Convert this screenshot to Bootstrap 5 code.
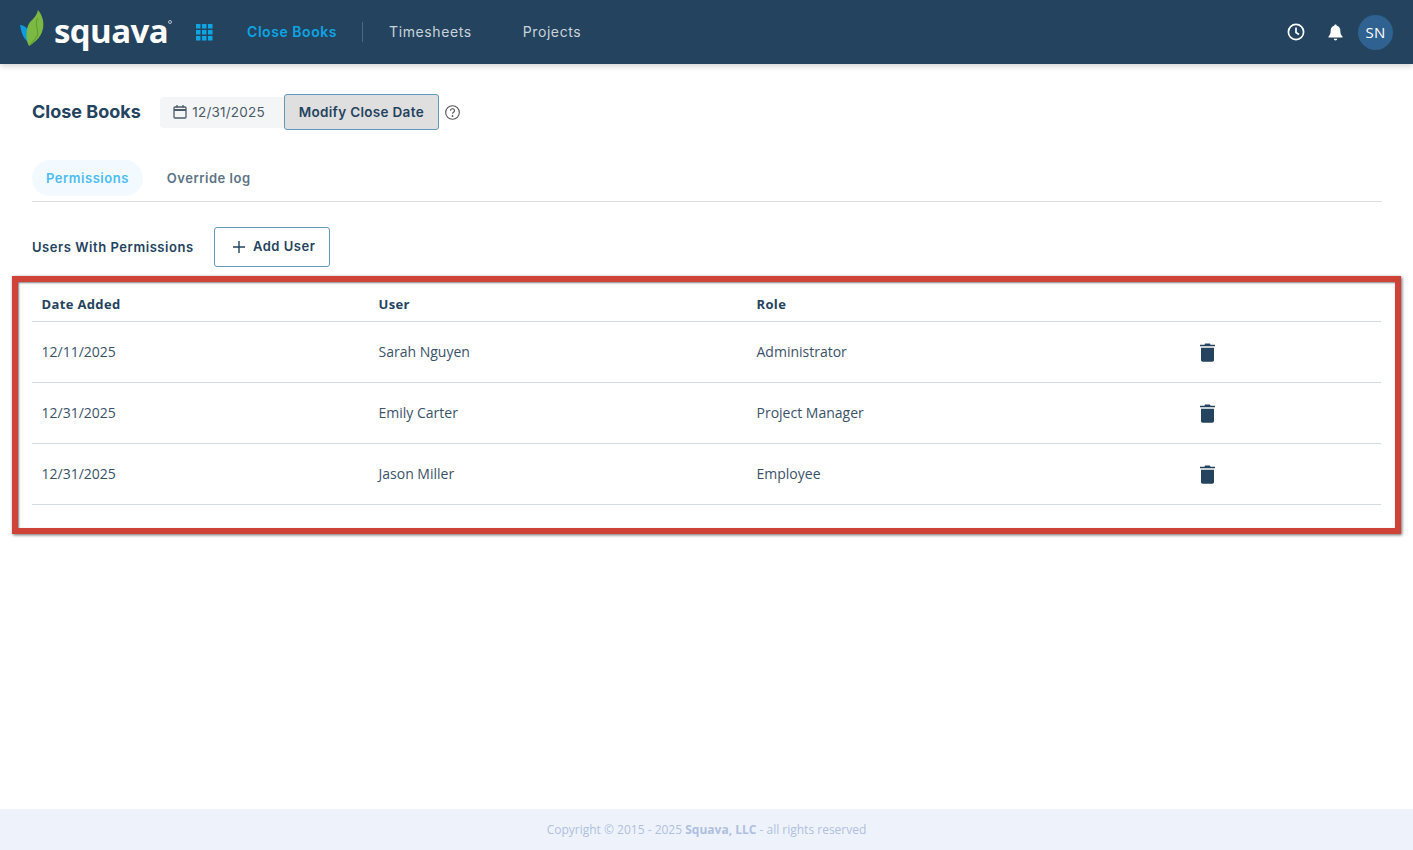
<!DOCTYPE html>
<html lang="en">
<head>
    <meta charset="UTF-8">
    <meta name="viewport" content="width=device-width, initial-scale=1.0">
    <title>Close Books</title>
    <link href="https://cdn.jsdelivr.net/npm/bootstrap@5.3.0/dist/css/bootstrap.min.css" rel="stylesheet">
    <style>
        html, body { height: 100%; }
        body {
            font-family: "Open Sans", sans-serif;
            color: #24435e;
            background: #fff;
        }
        .sq-top {
            height: 64px;
            background: #24435e;
            box-shadow: 0 2px 6px rgba(0,0,0,.18);
            padding: 0 20px;
        }
        .sq-logo-word {
            font-family: "Open Sans", sans-serif;
            font-weight: 700;
            font-size: 33px;
            line-height: 1;
            color: #fff;
            letter-spacing: -.6px;
            margin-left: 8px;
            margin-top: -3px;
        }
        .sq-reg { width: 4px; height: 4px; border: 1px solid #b9c4cf; border-radius: 50%; margin-top: -20px; margin-left: 0; }
        .sq-link {
            font-family: Inter, sans-serif;
            font-size: 14px;
            letter-spacing: .6px;
            color: #c9d3dc;
            text-decoration: none;
            margin-top: -2px;
        }
        .sq-link.is-on { color: #0ea5e4; font-weight: 600; letter-spacing: .55px; }
        .sq-sep { width: 1px; height: 20px; background: #4a6780; margin: 0 26px 0 25px; }
        .sq-avatar {
            width: 35px; height: 35px;
            background: #2f6290;
            color: #fff;
            font-size: 15px;
            letter-spacing: .3px;
        }
        .sq-main { padding: 30px 31px 0 32px; }
        .sq-title {
            font-family: Inter, sans-serif;
            font-weight: 700;
            font-size: 18px;
            color: #24435e;
            margin: 0 19px 0 0;
        }
        .sq-date {
            font-family: Inter, sans-serif;
            font-size: 13.5px;
            letter-spacing: .2px;
            height: 31px;
            width: 126px;
            padding-left: 13px;
            background: #f4f5f7;
            border-radius: 4px 0 0 4px;
            color: #4b5a68;
        }
        .sq-date svg { margin-right: 5.5px; }
        .sq-modify {
            font-family: Inter, sans-serif;
            font-weight: 600;
            font-size: 13.5px;
            letter-spacing: .32px;
            height: 36px;
            width: 155px;
            padding: 0;
            margin-left: -2px;
            background: #dfdfdf;
            border: 1px solid #5f9ab5;
            border-radius: 3px;
            color: #24435e;
        }
        .sq-help { margin-left: 6px; }
        .sq-tabs { margin-top: 30px; border-bottom: 1px solid #dcdfe2; padding-bottom: 5px; }
        .sq-tab {
            font-family: Inter, sans-serif;
            font-weight: 600;
            font-size: 13px;
            letter-spacing: .52px;
            height: 36px;
            padding: 1px 14px 0;
            border-radius: 18px;
            color: #5d7387;
            text-decoration: none;
        }
        .sq-tab.is-on { background: #f3faff; color: #4cbdf2; margin-right: 10px; }
        .sq-sub { margin-top: 25px; }
        .sq-subtitle {
            font-family: Inter, sans-serif;
            font-weight: 600;
            font-size: 13px;
            letter-spacing: .55px;
            color: #24435e;
            margin: 2px 20px 0 0;
        }
        .sq-add {
            font-family: Inter, sans-serif;
            font-weight: 600;
            font-size: 13px;
            letter-spacing: .5px;
            height: 40px;
            width: 116px;
            padding: 0 0 1px 5px;
            background: #fff;
            border: 1px solid #5f9ab5;
            border-radius: 3px;
            color: #24435e;
        }
        .sq-frame {
            margin: 9px -19px 0 -20px;
            padding: 0 14px 23px 14px;
            border: 6.5px solid #cf4238;
            box-shadow: 1px 1px 3px rgba(0,0,0,.6), inset 1px 1px 2px rgba(0,0,0,.5);
        }
        .sq-table { margin: 0; table-layout: fixed; font-size: 14px; color: #3a5269; }
        .sq-table th {
            font-size: 13px;
            font-weight: 700;
            letter-spacing: .35px;
            color: #24435e;
            height: 39px;
            padding: 6px 10px 0 9.5px;
            vertical-align: middle;
            border-bottom: 1px solid #d3dbe0;
        }
        .sq-table td {
            height: 61px;
            padding: 0 10px 0 9.5px;
            vertical-align: middle;
            border-bottom: 1px solid #d3dbe0;
        }
        .sq-trash { margin-left: .5px; }
        .sq-foot {
            height: 41px;
            background: #eef3fb;
            color: #afbfe0;
            font-size: 12px;
        }
    </style>
</head>
<body class="d-flex flex-column">
    <header class="sq-top d-flex align-items-center flex-shrink-0">
        <svg width="26" height="37" viewBox="0 0 26 37" style="margin-top:-7px">
            <path d="M0 15 C5 15 11 20 13 33 C6 33 2 27 0 15Z" fill="#0f9be0"/>
            <path d="M18 0 C25 8 28 25 9 36 C5 29 6 17 10 12 C14 8 17 5 18 0Z" fill="#7cb942"/>
            <path d="M18 8 C13 14 20 20 17 26 C15 30 12 33 10 35" fill="none" stroke="#5f9e33" stroke-width="1.1"/>
        </svg>
        <span class="sq-logo-word">squava</span>
        <span class="sq-reg"></span>
        <svg style="margin-left:24px" width="17" height="17" viewBox="0 0 17 17" fill="#0ea5e4">
            <rect x="0" y="0" width="4.5" height="4.5"/><rect x="6" y="0" width="4.5" height="4.5"/><rect x="12" y="0" width="4.5" height="4.5"/>
            <rect x="0" y="6" width="4.5" height="4.5"/><rect x="6" y="6" width="4.5" height="4.5"/><rect x="12" y="6" width="4.5" height="4.5"/>
            <rect x="0" y="12" width="4.5" height="4.5"/><rect x="6" y="12" width="4.5" height="4.5"/><rect x="12" y="12" width="4.5" height="4.5"/>
        </svg>
        <a class="sq-link is-on" href="#" style="margin-left:34px">Close Books</a>
        <span class="sq-sep"></span>
        <a class="sq-link" href="#">Timesheets</a>
        <a class="sq-link" href="#" style="margin-left:51px">Projects</a>
        <div class="ms-auto d-flex align-items-center">
            <svg width="18" height="18" viewBox="0 0 18 18" fill="none" stroke="#fff" stroke-width="1.7">
                <circle cx="9" cy="9" r="7.6"/><path d="M9 4.5V9.5L12 11.5"/>
            </svg>
            <svg style="margin-left:23px" width="15" height="17" viewBox="0 0 15 17" fill="#fff">
                <path d="M7.5 0.5c.8 0 1.2.5 1.2 1.2C11 2.2 12.3 4 12.3 6.5c0 3.6 1 4.6 2.2 6v1H.5v-1c1.2-1.4 2.2-2.4 2.2-6 0-2.500 1.300-4.300 3.600-4.800C6.300 1 6.700.5 7.500.5Z"/>
                <path d="M5.800 14.800h3.400a1.700 1.700 0 0 1-3.400 0Z"/>
            </svg>
            <div class="sq-avatar rounded-circle d-flex align-items-center justify-content-center" style="margin-left:15px">SN</div>
        </div>
    </header>

    <main class="sq-main flex-grow-1">
        <div class="d-flex align-items-center">
            <h1 class="sq-title">Close Books</h1>
            <div class="sq-date d-flex align-items-center">
                <svg width="14" height="14" viewBox="0 0 14 14" fill="none" stroke="#4b5a68" stroke-width="1.3">
                    <rect x="1" y="2" width="12" height="11" rx="1"/><path d="M1 5H13" stroke-width="2"/><path d="M4 0V2.500M10 0V2.500"/>
                </svg>
                12/31/2025
            </div>
            <button class="btn sq-modify" type="button">Modify Close Date</button>
            <svg class="sq-help" width="15" height="15" viewBox="0 0 15 15" fill="none" stroke="#555" stroke-width="1.1">
                <circle cx="7.500" cy="7.500" r="6.800"/>
                <path d="M5.500 5.800c0-1.300 1-2 2-2s2 .7 2 1.900c0 1.500-2 1.500-2 3.100"/>
                <circle cx="7.500" cy="11" r=".4" fill="#555"/>
            </svg>
        </div>

        <div class="sq-tabs d-flex align-items-center">
            <a class="sq-tab is-on d-flex align-items-center" href="#">Permissions</a>
            <a class="sq-tab d-flex align-items-center" href="#">Override log</a>
        </div>

        <div class="sq-sub d-flex align-items-center">
            <h2 class="sq-subtitle">Users With Permissions</h2>
            <button class="btn sq-add d-flex align-items-center justify-content-center" type="button">
                <svg class="me-2" width="12" height="12" viewBox="0 0 12 12" stroke="#24435e" stroke-width="1.400"><path d="M6 0V12M0 6H12"/></svg>
                Add User
            </button>
        </div>

        <div class="sq-frame">
            <table class="table sq-table">
                <colgroup>
                    <col style="width:337px"><col style="width:378px"><col style="width:443px"><col>
                </colgroup>
                <thead>
                    <tr><th>Date Added</th><th>User</th><th>Role</th><th></th></tr>
                </thead>
                <tbody>
                    <tr>
                        <td>12/11/2025</td><td>Sarah Nguyen</td><td>Administrator</td>
                        <td><svg class="sq-trash" width="15" height="19" viewBox="0 0 15 19" fill="#24435e"><path d="M5 0.500h5l.5 1.200H15v1.600H0V1.700h4.500Z"/><path d="M1 4.700h13V17c0 1-.8 1.700-1.700 1.700H2.700C1.800 18.700 1 18 1 17Z"/></svg></td>
                    </tr>
                    <tr>
                        <td>12/31/2025</td><td>Emily Carter</td><td>Project Manager</td>
                        <td><svg class="sq-trash" width="15" height="19" viewBox="0 0 15 19" fill="#24435e"><path d="M5 0.500h5l.5 1.200H15v1.600H0V1.700h4.500Z"/><path d="M1 4.700h13V17c0 1-.8 1.700-1.700 1.700H2.700C1.800 18.700 1 18 1 17Z"/></svg></td>
                    </tr>
                    <tr>
                        <td>12/31/2025</td><td>Jason Miller</td><td>Employee</td>
                        <td><svg class="sq-trash" width="15" height="19" viewBox="0 0 15 19" fill="#24435e"><path d="M5 0.500h5l.5 1.200H15v1.600H0V1.700h4.500Z"/><path d="M1 4.700h13V17c0 1-.8 1.700-1.700 1.700H2.700C1.800 18.700 1 18 1 17Z"/></svg></td>
                    </tr>
                </tbody>
            </table>
        </div>
    </main>

    <footer class="sq-foot d-flex align-items-center justify-content-center flex-shrink-0">
        <span>Copyright © 2015 - 2025 <b>Squava, LLC</b> - all rights reserved</span>
    </footer>

    <script src="https://cdn.jsdelivr.net/npm/bootstrap@5.3.0/dist/js/bootstrap.bundle.min.js"></script>
</body>
</html>
